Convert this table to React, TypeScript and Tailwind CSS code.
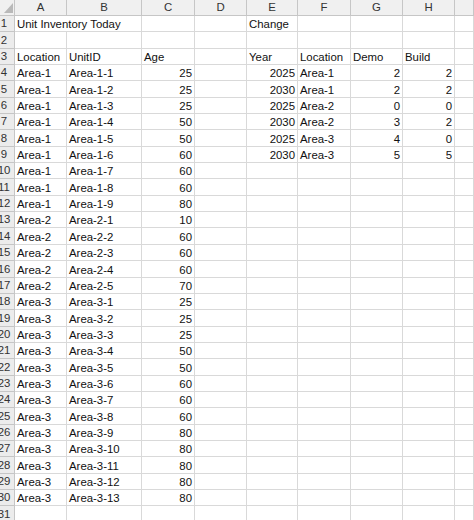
import React from "react";

const cols = ["A", "B", "C", "D", "E", "F", "G", "H", ""];

type Cell = { v: string; right?: boolean; overflow?: boolean };

const ages: [string, string, number][] = [
  ["Area-1", "Area-1-1", 25],
  ["Area-1", "Area-1-2", 25],
  ["Area-1", "Area-1-3", 25],
  ["Area-1", "Area-1-4", 50],
  ["Area-1", "Area-1-5", 50],
  ["Area-1", "Area-1-6", 60],
  ["Area-1", "Area-1-7", 60],
  ["Area-1", "Area-1-8", 60],
  ["Area-1", "Area-1-9", 80],
  ["Area-2", "Area-2-1", 10],
  ["Area-2", "Area-2-2", 60],
  ["Area-2", "Area-2-3", 60],
  ["Area-2", "Area-2-4", 60],
  ["Area-2", "Area-2-5", 70],
  ["Area-3", "Area-3-1", 25],
  ["Area-3", "Area-3-2", 25],
  ["Area-3", "Area-3-3", 25],
  ["Area-3", "Area-3-4", 50],
  ["Area-3", "Area-3-5", 50],
  ["Area-3", "Area-3-6", 60],
  ["Area-3", "Area-3-7", 60],
  ["Area-3", "Area-3-8", 60],
  ["Area-3", "Area-3-9", 80],
  ["Area-3", "Area-3-10", 80],
  ["Area-3", "Area-3-11", 80],
  ["Area-3", "Area-3-12", 80],
  ["Area-3", "Area-3-13", 80],
];

const change: [number, string, number, number][] = [
  [2025, "Area-1", 2, 2],
  [2030, "Area-1", 2, 2],
  [2025, "Area-2", 0, 0],
  [2030, "Area-2", 3, 2],
  [2025, "Area-3", 4, 0],
  [2030, "Area-3", 5, 5],
];

function buildRows(): (Cell | null)[][] {
  const rows: (Cell | null)[][] = [];
  for (let r = 1; r <= 31; r++) {
    const row: (Cell | null)[] = new Array(9).fill(null);
    if (r === 1) {
      row[0] = { v: "Unit Inventory Today", overflow: true };
      row[4] = { v: "Change" };
    } else if (r === 3) {
      row[0] = { v: "Location" };
      row[1] = { v: "UnitID" };
      row[2] = { v: "Age" };
      row[4] = { v: "Year" };
      row[5] = { v: "Location" };
      row[6] = { v: "Demo" };
      row[7] = { v: "Build" };
    } else if (r >= 4 && r <= 30) {
      const a = ages[r - 4];
      row[0] = { v: a[0] };
      row[1] = { v: a[1] };
      row[2] = { v: String(a[2]), right: true };
      const c = change[r - 4];
      if (c) {
        row[4] = { v: String(c[0]), right: true };
        row[5] = { v: c[1] };
        row[6] = { v: String(c[2]), right: true };
        row[7] = { v: String(c[3]), right: true };
      }
    }
    rows.push(row);
  }
  return rows;
}

export default function App() {
  const rows = buildRows();
  return (
    <div
      className="w-[474px] h-[520px] overflow-hidden bg-white text-[#111]"
      style={{ fontFamily: '"Liberation Sans", Arial, sans-serif' }}
    >
      <div className="grid grid-cols-[15px_52px_75px_53px_52px_51px_53px_52px_52px_1fr] grid-rows-[16px_repeat(31,16.35px)] text-[11.4px] leading-[13px]">
        {/* corner */}
        <div className="relative bg-[#f0f0f0] border-r border-b border-[#c6c6c6] overflow-hidden">
          <svg className="absolute left-[4px] top-[3px]" width="9" height="10" viewBox="0 0 9 10">
            <polygon points="9,0 9,10 0,10" fill="#b9b9b9" />
          </svg>
        </div>
        {cols.map((c, i) => (
          <div
            key={"h" + i}
            className="flex items-center justify-center bg-[#f0f0f0] border-r border-b border-[#c6c6c6] text-[#333]"
          >
            {c}
          </div>
        ))}
        {rows.map((row, ri) => (
          <React.Fragment key={"r" + ri}>
            <div className="relative bg-[#ececec] border-r border-b border-[#c6c6c6] overflow-hidden text-[#333]">
              <div className="absolute left-[-10px] w-[28px] bottom-[1px] text-center">{ri + 1}</div>
            </div>
            {row.map((cell, ci) => (
              <div
                key={"c" + ri + "-" + ci}
                className={
                  "relative flex items-end border-b border-[#d9d9d9] px-[2px] whitespace-nowrap " +
                  (cell && cell.overflow ? "overflow-visible z-10 " : "border-r overflow-hidden ") +
                  (cell && cell.right ? "justify-end" : "justify-start")
                }
              >
                {cell ? cell.v : ""}
              </div>
            ))}
          </React.Fragment>
        ))}
      </div>
    </div>
  );
}
